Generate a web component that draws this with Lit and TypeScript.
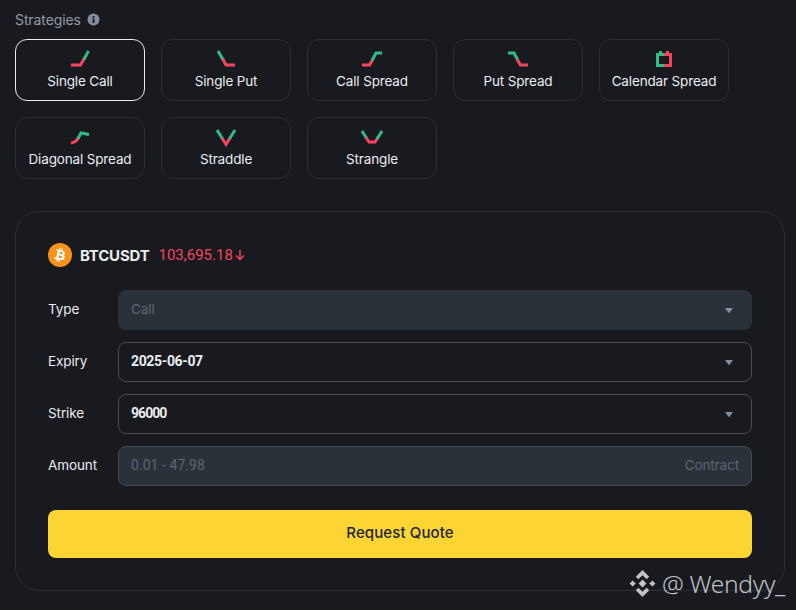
import { LitElement, html, css, svg } from "lit";
import { customElement } from "lit/decorators.js";

const G = "#2EBD85";
const R = "#F6465D";
const seg = (pts: string, c: string) =>
  svg`<polyline points=${pts} fill="none" stroke=${c} stroke-width="3" stroke-linejoin="miter" />`;

const icons: Record<string, unknown> = {
  call: svg`${seg("71,65 80.5,65 84.5,58", R)}${seg("83.8,59.5 88.5,51", G)}`,
  put: svg`${seg("218,51 223.5,60.5", G)}${seg("222.8,59 226,65 235,65", R)}`,
  callSpread: svg`${seg("362,65 369.5,65 373,59", R)}${seg("372,60.5 376,53 382,53", G)}`,
  putSpread: svg`${seg("508,53 514,53 518,60.5", G)}${seg("517,59 520.5,65 528,65", R)}`,
  calendar: svg``,
  diagonal: svg`${seg("71,143.5 76,141 79,137", R)}${seg("78,138.5 81,133 89,134.5", G)}`,
  straddle: svg`${seg("217,130 222.6,139", G)}${seg("222,138 226,144.5 230,138", R)}${seg("229.4,139 235,130", G)}`,
  strangle: svg`${seg("362,131 367,139", G)}${seg("366,137.5 369,142 375,142 378,137.5", R)}${seg("377,139 382,131", G)}`,
};

const strategies = [
  { label: "Single Call", icon: "call", active: true },
  { label: "Single Put", icon: "put" },
  { label: "Call Spread", icon: "callSpread" },
  { label: "Put Spread", icon: "putSpread" },
  { label: "Calendar Spread", icon: "calendar" },
  { label: "Diagonal Spread", icon: "diagonal" },
  { label: "Straddle", icon: "straddle" },
  { label: "Strangle", icon: "strangle" },
];
const origins: Record<string, [number, number]> = {
  call: [65, 47], put: [211, 47], callSpread: [357, 47], putSpread: [503, 47], calendar: [649, 47],
  diagonal: [65, 125], straddle: [211, 125], strangle: [357, 125],
};

@customElement("app-root")
export class AppRoot extends LitElement {
  static styles = css`
    :host { display: block; width: 796px; height: 610px; background: #181a20; position: relative; overflow: hidden;
      font-family: Inter, "Noto Sans", sans-serif; color: #eaecef; font-size: 14px; }
    .page { padding: 9px 11px 0 15px; display: flex; flex-direction: column; }
    .title { display: flex; align-items: center; gap: 6px; height: 20px; color: #929aa5; font-size: 14px; letter-spacing: -0.1px; }
    .grid { display: flex; flex-wrap: wrap; gap: 16px; margin-top: 10px; }
    .tile { width: 130px; height: 62px; box-sizing: border-box; border: 1px solid #2b3139; border-radius: 12px;
      display: flex; flex-direction: column; align-items: center; padding-top: 7px; }
    .tile.active { border-color: #eaecef; }
    .tile svg { display: block; width: 30px; height: 24px; }
    .tile span { font-size: 13.5px; line-height: 18px; margin-top: 1px; letter-spacing: -0.15px; white-space: nowrap; }
    .card { margin-top: 32px; height: 380px; box-sizing: border-box; border: 1px solid #2b3139; border-radius: 24px;
      padding: 31px 32px 32px; display: flex; flex-direction: column; }
    .head { display: flex; align-items: center; height: 24px; }
    .sym { font-weight: 700; font-size: 15px; margin-left: 8px; letter-spacing: -0.2px; }
    .price { color: #f6465d; font-family: Roboto, sans-serif; font-size: 15px; margin-left: 9px; }
    .arrow { margin-left: 2px; display: block; }
    .rows { display: flex; flex-direction: column; gap: 12px; margin-top: 23px; }
    .row { display: flex; align-items: center; height: 40px; }
    .lab { width: 70px; flex: none; font-size: 13.5px; letter-spacing: -0.1px; padding-bottom: 2px; }
    .field { flex: 1; height: 40px; box-sizing: border-box; border: 1px solid #474d57; border-radius: 8px;
      display: flex; align-items: center; justify-content: space-between; padding: 0 12px 0;
      font-family: Roboto, sans-serif; font-weight: 700; font-size: 14px; letter-spacing: -0.35px; }
    .field > span { padding-bottom: 2px; }
    .field .num { letter-spacing: -0.95px; }
    .field.off { background: #2b3139; border-color: #2b3139; color: #5e6673; font-weight: 400; letter-spacing: 0.05px; }
    .field.input { border-color: #474d57; }
    .field.off .call { font-family: Inter, sans-serif; font-size: 13.5px; letter-spacing: -0.1px; }
    .caret { display: block; margin-right: 6px; }
    .unit { color: #5e6673; font-family: Inter, sans-serif; font-size: 13.5px; letter-spacing: -0.1px; }
    .btn { margin-top: 24px; height: 48px; flex: none; box-sizing: border-box; padding-bottom: 3px; background: #fcd535; border-radius: 8px; color: #202630;
      display: flex; align-items: center; justify-content: center; font-weight: 500; font-size: 15px; letter-spacing: 0.1px; }
    .wm { position: absolute; left: 628px; top: 569px; display: flex; align-items: center; gap: 5px; color: #c9ccd1;
      font-family: "Noto Sans", sans-serif; font-weight: 300; font-size: 24.5px; line-height: 28px; white-space: nowrap; letter-spacing: -0.3px; opacity: 0.95; }
  `;

  private icon(s: { icon: string }) {
    const [x, y] = origins[s.icon];
    if (s.icon === "calendar") {
      return html`<svg viewBox="0 0 30 24" aria-hidden="true">
        <path d="M7 6h3V4h3v2h2v3h-5v8h5v3H7z" fill=${G} />
        <path d="M15 6h2V4h3v2h3v14h-8v-3h5V9h-5z" fill=${R} />
      </svg>`;
    }
    return html`<svg viewBox="${x} ${y} 30 24" aria-hidden="true">${icons[s.icon]}</svg>`;
  }

  private caret() {
    return html`<svg class="caret" width="8" height="5" viewBox="0 0 8 5"><path d="M0 0h8L4.700 4.600a.9.9 0 0 1-1.400 0z" fill="#848e9c" /></svg>`;
  }

  render() {
    return html`
      <div class="page">
        <div class="title">Strategies
          <svg width="13" height="13" viewBox="0 0 13 13"><circle cx="6.5" cy="6.5" r="6" fill="#848e9c"/><rect x="5.6" y="5.6" width="1.9" height="4.4" fill="#181a20"/><rect x="5.6" y="3" width="1.9" height="1.8" fill="#181a20"/></svg>
        </div>
        <div class="grid">
          ${strategies.map(
            (s) => html`<div class="tile ${s.active ? "active" : ""}">${this.icon(s)}<span>${s.label}</span></div>`
          )}
        </div>
        <div class="card">
          <div class="head">
            <svg width="24" height="24" viewBox="0 0 24 24">
              <circle cx="12" cy="12" r="12" fill="#f7931a"/>
              <path fill="#fff" fill-rule="evenodd" d="M16.9 10.5c.2-1.5-.9-2.3-2.5-2.8l.5-2-1.2-.3-.5 2-1-.2.5-2-1.2-.3-.5 2-.8-.2-1.7-.4-.3 1.300s.9.2.9.2c.5.1.6.4.6.700l-1.400 5.500c-.1.200-.2.400-.600.300l-.9-.2-.6 1.400 1.600.4.9.2-.5 2.100 1.200.3.5-2 1 .2-.5 2 1.200.3.5-2.100c2.100.4 3.700.200 4.400-1.700.5-1.500 0-2.400-1.100-3 .8-.2 1.400-.7 1.500-1.800zm-2.800 3.900c-.4 1.500-2.900.7-3.700.5l.7-2.700c.8.200 3.400.6 3 2.200zm.4-4c-.3 1.400-2.400.7-3.100.5l.6-2.400c.7.200 2.900.5 2.500 1.900z"/>
            </svg>
            <span class="sym">BTCUSDT</span>
            <span class="price">103,695.18</span>
            <svg class="arrow" width="10" height="12" viewBox="0 0 10 12"><path d="M5 1v9.500M1 6.500l4 4 4-4" fill="none" stroke="#f6465d" stroke-width="1.500"/></svg>
          </div>
          <div class="rows">
            <div class="row"><div class="lab">Type</div><div class="field off"><span class="call">Call</span>${this.caret()}</div></div>
            <div class="row"><div class="lab">Expiry</div><div class="field"><span>2025-06-07</span>${this.caret()}</div></div>
            <div class="row"><div class="lab">Strike</div><div class="field"><span class="num">96000</span>${this.caret()}</div></div>
            <div class="row"><div class="lab">Amount</div><div class="field off input"><span>0.01 - 47.98</span><span class="unit">Contract</span></div></div>
          </div>
          <div class="btn">Request Quote</div>
        </div>
      </div>
      <div class="wm">
        <svg width="29" height="29" viewBox="0 0 28 28"><g fill="#c9ccd1">
          <path d="M14 1l6.500 6.500-2.500 2.500L14 6l-4 4-2.500-2.500z"/>
          <path d="M14 27l-6.500-6.500L10 18l4 4 4-4 2.500 2.500z"/>
          <path d="M4.500 11L7.500 14l-3 3L1.500 14z"/>
          <path d="M23.500 11l3 3-3 3-3-3z"/>
          <path d="M14 10.200l3.800 3.800-3.800 3.800-3.800-3.800z"/>
        </g></svg>
        <span>@ Wendyy_</span>
      </div>
    `;
  }
}
